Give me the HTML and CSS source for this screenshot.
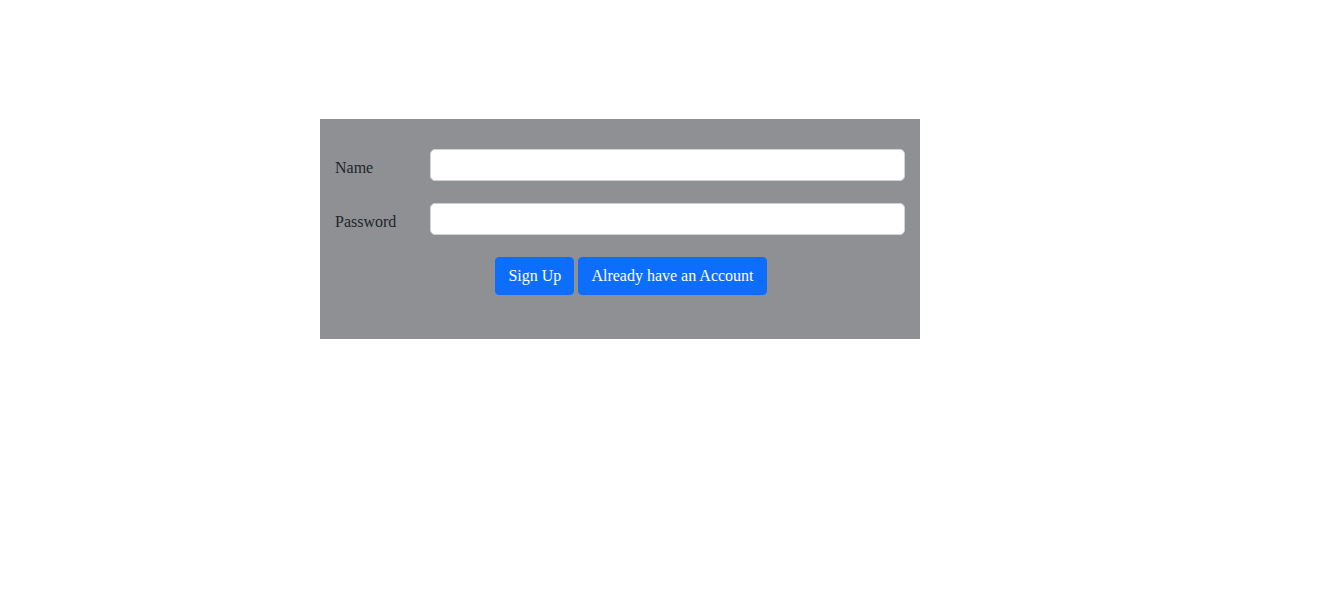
FILE: index.html
```html
<!DOCTYPE html>
<html>
<head>
<meta charset="utf-8">
<link rel="stylesheet" href="styles.css">
</head>
<body>
<div class="page">
  <form class="panel">
    <div class="row">
      <label class="label">Name</label>
      <input class="input" type="text">
    </div>
    <div class="row">
      <label class="label">Password</label>
      <input class="input" type="password">
    </div>
    <div class="actions">
      <button type="button" class="btn">Sign Up</button>
      <button type="button" class="btn">Already have an Account</button>
    </div>
  </form>
</div>
</body>
</html>
```
FILE: styles.css
```css
html, body {
  margin: 0;
  padding: 0;
  background: #ffffff;
}
body {
  font-family: "Liberation Serif", "Times New Roman", serif;
  font-size: 16px;
  line-height: 1.5;
  color: #212529;
}
.page {
  padding-top: 119px;
  padding-left: 320px;
}
.panel {
  width: 600px;
  height: 220px;
  box-sizing: border-box;
  background: #8f9094;
  padding: 30px 15px 0 15px;
  display: flex;
  flex-direction: column;
  gap: 22px;
}
.row {
  display: flex;
  align-items: center;
}
.label {
  width: 95px;
  flex: none;
  color: #212529;
  padding-top: 6px;
}
.input {
  flex: 1;
  height: 32px;
  box-sizing: border-box;
  border: 1px solid #ced4da;
  border-radius: 5px;
  background: #fff;
  padding: 4px 12px;
  font: inherit;
  outline: none;
}
.actions {
  display: flex;
  justify-content: center;
  gap: 4px;
  padding-left: 22px;
}
.btn {
  height: 38px;
  box-sizing: border-box;
  background: #0d6efd;
  color: #fff;
  border: 1px solid #0d6efd;
  border-radius: 4px;
  padding: 6px 12px;
  font: inherit;
  line-height: 1.5;
  cursor: pointer;
}
```
